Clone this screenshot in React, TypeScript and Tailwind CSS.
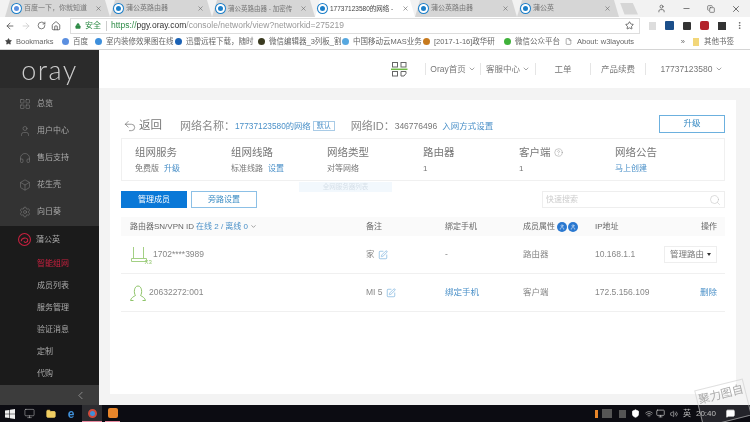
import { ChevronDown, ChevronLeft, ArrowLeft, ArrowRight, RotateCw, Home, Lock, Star, X, Minus, Copy, User, LayoutGrid, Headphones, Box, Settings, Search, SquarePen, CircleHelp, Undo2, Folder, MoreVertical, Monitor, Volume2, MessageSquare, ShieldCheck, File, Wifi } from 'lucide-react'

const tabs = [
  { title: '百度一下，你就知道', w: 'w-[105px]', pad: 'pl-[7px] pr-[8px]', size: 'text-[7px]', icon: 'bg-[#5b8fe0]' },
  { title: '蒲公英路由器', w: 'w-[102px]', pad: 'pl-[4px] pr-[8px]', size: 'text-[7px]', icon: 'bg-[#1c7fc9]' },
  { title: '蒲公英路由器 - 加密传', w: 'w-[103px]', pad: 'pl-[4px] pr-[8px]', size: 'text-[6.5px]', icon: 'bg-[#1c7fc9]' },
  { title: '17737123580的网络 -', w: 'w-[100px]', pad: 'pl-[3px] pr-[6px]', size: 'text-[6.5px]', icon: 'bg-[#1c7fc9]', active: true },
  { title: '蒲公英路由器', w: 'w-[102px]', pad: 'pl-[4px] pr-[8px]', size: 'text-[7px]', icon: 'bg-[#1c7fc9]' },
  { title: '蒲公英', w: 'w-[102px]', pad: 'pl-[4px] pr-[8px]', size: 'text-[7px]', icon: 'bg-[#1c7fc9]' },
]

const bookmarks = [
  { label: '百度', w: 'w-[33px]', icon: 'bg-[#5b8fe0]' },
  { label: '室内装修效果图在线', w: 'w-[80px]', icon: 'bg-[#3d8fdc]' },
  { label: '迅雷远程下载，随时', w: 'w-[83px]', icon: 'bg-[#1b62b5]' },
  { label: '微信编辑器_3列板_割', w: 'w-[84px]', icon: 'bg-[#3a3a20]' },
  { label: '中国移动云MAS业务', w: 'w-[81px]', icon: 'bg-[#57a8e0]' },
  { label: '[2017-1-16]政华研', w: 'w-[81px]', icon: 'bg-[#c77a1e]' },
  { label: '微信公众平台', w: 'w-[61px]', icon: 'bg-[#3fb13a]' },
]

const menu = [
  { label: '总览', Icon: LayoutGrid },
  { label: '用户中心', Icon: User },
  { label: '售后支持', Icon: Headphones },
  { label: '花生壳', Icon: Box },
  { label: '向日葵', Icon: Settings },
]

const subMenu = ['成员列表', '服务管理', '验证消息', '定制', '代购']

const info = [
  { title: '组网服务', value: '免费版', link: '升级' },
  { title: '组网线路', value: '标准线路', link: '设置' },
  { title: '网络类型', value: '对等网络' },
  { title: '路由器', value: '1' },
  { title: '客户端', value: '1', help: true },
  { title: '网络公告', link: '马上创建' },
]

const rowGrid = 'grid grid-cols-[236px_79px_78px_72px_1fr] items-center pl-[9px] pr-2'

function Tab({ title, w, pad, size, icon, active }: { title: string; w: string; pad: string; size: string; icon: string; active?: boolean }) {
  return (
    <div className={`${w} ${pad} relative flex h-[17px] shrink-0 items-center gap-[2px]`}>
      <div className={`absolute inset-0 [clip-path:polygon(0_100%,5px_0,calc(100%-5px)_0,100%_100%)] ${active ? 'bg-white' : 'bg-[#d6d6d6]'}`} />
      <div className={`relative h-[9px] w-[9px] shrink-0 rounded-full border-2 border-white ${icon} ring-1 ring-[#1c7fc9]`} />
      <span className={`relative ml-[1px] flex-1 overflow-hidden whitespace-nowrap ${size} ${active ? 'text-[#444]' : 'text-[#777]'}`}>{title}</span>
      <X size={7} className="relative shrink-0 text-[#666]" />
    </div>
  )
}

function OrayQr() {
  return (
    <svg width="17" height="15" viewBox="0 0 17 15" fill="none" stroke="#666" strokeWidth="1">
      <rect x="1.5" y="0.5" width="5" height="4.500" />
      <rect x="10" y="0.500" width="5" height="4.500" />
      <rect x="1.500" y="9.500" width="5" height="4.500" />
      <path d="M10 9.500h5v2l-2 2.500h-3z" />
      <path d="M0 7.300h16.500" stroke="#6fb845" strokeWidth="1.500" />
    </svg>
  )
}

function RouterIcon() {
  return (
    <svg width="22" height="18" viewBox="0 0 22 18" fill="none" stroke="#a3d084" strokeWidth="1">
      <path d="M3.500 1v11M13.500 1v11M1.500 12.500h15v3h-15z" />
      <text x="14.500" y="17.500" fontSize="6" fill="#8fc46a" stroke="none" fontFamily="Liberation Sans, sans-serif">X3</text>
    </svg>
  )
}

function ClientIcon() {
  return (
    <svg width="16" height="16" viewBox="0 0 16 16" fill="none" stroke="#8fc46a" strokeWidth="1">
      <path d="M5.500 10.500C3.500 8 4 1 8 1s4.500 7 2.500 9.500" />
      <path d="M5.500 10.500C3.500 11.500 1 13 .5 15.500h3M10.500 10.500c2 1 4.500 2.500 5 5h-3" />
    </svg>
  )
}

export default function App() {
  return (
    <div className="relative flex h-[422px] w-[750px] flex-col overflow-hidden bg-white font-['Liberation_Sans','Noto_Sans_CJK_SC',sans-serif] text-[#666] blur-[0.4px]">
      {/* 标签栏 */}
      <div className="flex h-[17px] shrink-0 items-center bg-[#f2f2f2] pl-[5px]">
        {tabs.map((t) => (
          <Tab key={t.title + t.w} {...t} />
        ))}
        <div className="ml-[1px] h-[12px] w-[18px] shrink-0 bg-[#d6d6d6] [clip-path:polygon(0_0,70%_0,100%_100%,25%_100%)]" />
        <div className="ml-auto flex items-center gap-[16px] pr-[9px] text-[#555]">
          <User size={9} />
          <Minus size={9} />
          <Copy size={8} />
          <X size={10} />
        </div>
      </div>
      {/* 地址栏 */}
      <div className="flex h-[17px] shrink-0 items-center bg-white pl-[5px] text-[#555]">
        <ArrowLeft size={10} />
        <ArrowRight size={10} className="ml-[6px] text-[#ccc]" />
        <RotateCw size={9} className="ml-[6px]" />
        <Home size={10} className="ml-[5px]" />
        <div className="ml-[9px] flex h-[16px] w-[200px] flex-1 items-center border border-[#ddd] pl-[4px] text-[8.500px]">
          <Lock size={6} className="fill-[#2e8b47] text-[#2e8b47]" />
          <span className="ml-[4px] text-[8px] text-[#2e8b47]">安全</span>
          <span className="ml-[5px] mr-[4px] h-[10px] w-px bg-[#ccc]" />
          <span className="text-[#2e8b47]">https://</span>
          <span className="text-[#333]">pgy.oray.com</span>
          <span className="text-[#999]">/console/network/view?networkid=275219</span>
          <Star size={9} className="ml-auto mr-[5px] text-[#444]" />
        </div>
        <div className="flex w-[110px] shrink-0 items-center gap-[9px] pl-[9px]">
          <div className="h-[8px] w-[7px] bg-[#ddd]" />
          <div className="h-[9px] w-[9px] rounded-[1px] bg-[#1c4f8a]" />
          <div className="h-[8px] w-[8px] rounded-[1px] bg-[#333]" />
          <div className="h-[9px] w-[9px] rounded-[2px] bg-[#b3232b]" />
          <div className="h-[8px] w-[8px] bg-[#333]" />
          <MoreVertical size={9} />
        </div>
      </div>
      {/* 书签栏 */}
      <div className="flex h-[16px] shrink-0 items-center border-b border-[#d5d5d5] bg-white pl-[5px] text-[7.500px] text-[#666]">
        <Star size={7} className="fill-[#444] text-[#444]" />
        <span className="ml-[4px] w-[46px]">Bookmarks</span>
        {bookmarks.map((b) => (
          <div key={b.label} className={`${b.w} flex shrink-0 items-center gap-[4px] overflow-hidden whitespace-nowrap`}>
            <span className={`h-[7px] w-[7px] shrink-0 rounded-full ${b.icon}`} />
            <span className="overflow-hidden">{b.label}</span>
          </div>
        ))}
        <File size={7} className="text-[#777]" />
        <span className="ml-[5px]">About: w3layouts</span>
        <span className="ml-auto">»</span>
        <span className="ml-[8px] h-[8px] w-[6px] bg-[#f2d679]" />
        <span className="ml-[5px] mr-[16px]">其他书签</span>
      </div>

      <div className="flex min-h-0 flex-1">
        {/* 侧边栏 */}
        <aside className="flex w-[99px] shrink-0 flex-col bg-[#333] text-[8px] text-[#aaa]">
          <div className="flex h-[38px] shrink-0 items-center justify-center bg-[#2b2b2b]">
            <span className="font-['Lato',sans-serif] text-[27px] font-light leading-none tracking-[1.500px] text-[#ccc]">oray</span>
          </div>
          <div className="flex flex-col pt-[2px]">
            {menu.map(({ label, Icon }) => (
              <div key={label} className="flex h-[27.200px] items-center gap-[6px] pl-[19px]">
                <Icon size={12} strokeWidth={1} className="text-[#888]" />
                <span>{label}</span>
              </div>
            ))}
          </div>
          <div className="flex flex-1 flex-col bg-[#1b1b1b]">
            <div className="flex h-[28px] shrink-0 items-center gap-[5px] pl-[18px]">
              <svg width="13" height="13" viewBox="0 0 12 12" fill="none" stroke="#c8203f" strokeWidth="1">
                <circle cx="6" cy="6" r="5.500" />
                <path d="M3 7.500C3 4.500 8.500 3.500 9 6.500 9.300 8.800 6 9.500 5.500 7.500" />
              </svg>
              <span>蒲公英</span>
            </div>
            <div className="flex h-[20px] shrink-0 items-center pl-[37px] text-[#c8203f]">智能组网</div>
            <div className="flex flex-col pt-[1px]">
              {subMenu.map((s) => (
                <div key={s} className="flex h-[22px] items-center pl-[37px]">{s}</div>
              ))}
            </div>
          </div>
          <div className="flex h-[22px] shrink-0 items-center justify-end bg-[#3c3c3c] pr-[12px]">
            <ChevronLeft size={13} strokeWidth={1} className="text-[#ccc]" />
          </div>
        </aside>

        <div className="flex min-w-0 flex-1 flex-col">
          {/* 顶部导航 */}
          <header className="flex h-[38px] shrink-0 items-center bg-white text-[8.500px] text-[#777]">
            <div className="ml-[292px] flex w-[34px] shrink-0 items-center"><OrayQr /></div>
            <div className="flex h-[12px] w-[55px] items-center justify-center gap-[2px] border-l border-[#e5e5e5]">Oray首页<ChevronDown size={8} /></div>
            <div className="flex h-[12px] w-[55px] items-center justify-center gap-[2px] border-l border-[#e5e5e5]">客服中心<ChevronDown size={8} /></div>
            <div className="flex h-[12px] w-[55px] items-center justify-center border-l border-[#e5e5e5]">工单</div>
            <div className="flex h-[12px] w-[55px] items-center justify-center border-l border-[#e5e5e5]">产品续费</div>
            <div className="flex h-[12px] w-[92px] items-center justify-center gap-[2px] border-l border-[#e5e5e5]">17737123580<ChevronDown size={8} /></div>
          </header>

          {/* 主内容 */}
          <main className="flex min-h-0 flex-1 bg-[#f3f3f3] pb-[11px] pl-[11px] pr-[14px] pt-[12px]">
            <div className="relative flex flex-1 flex-col bg-white pl-[11px] pr-[11px] pt-[14px]">
              <div className="flex h-[24px] shrink-0 items-center">
                <Undo2 size={14} strokeWidth={1} className="ml-[2px] text-[#555]" />
                <span className="ml-[2px] w-[41px] text-[11.500px] text-[#777]">返回</span>
                <span className="text-[11px] text-[#888]">网络名称：</span>
                <span className="text-[8.300px] text-[#4a90c8]">17737123580的网络</span>
                <span className="ml-[2px] flex h-[10px] w-[22px] items-center justify-center border border-[#a9cbe6] text-[7px] text-[#4a90c8]">默认</span>
                <span className="ml-[16px] text-[11px] text-[#888]">网络ID：</span>
                <span className="text-[8.500px] text-[#777]">346776496</span>
                <span className="ml-[5px] text-[8.500px] text-[#4a90c8]">入网方式设置</span>
                <button className="ml-auto mb-[5px] flex h-[18px] w-[66px] items-center justify-center border border-[#6cb0de] text-[8.500px] text-[#3a8cc4]">升级</button>
              </div>

              <div className="grid h-[43px] shrink-0 grid-cols-[96px_96px_96px_96px_96px_1fr] content-center gap-y-[5px] border border-[#f0f0f0]">
                {info.map((c) => (
                  <div key={c.title} className="pl-[13px] text-[10.500px] leading-[13px] text-[#777]">
                    <span className="flex items-center gap-[3px]">
                      {c.title}
                      {c.help && <CircleHelp size={9} strokeWidth={1} />}
                    </span>
                  </div>
                ))}
                {info.map((c) => (
                  <div key={c.title + 'v'} className="pl-[13px] text-[8px] leading-[10px] text-[#777]">
                    {c.value}
                    {c.link && <span className={`${c.value ? 'ml-[5px]' : ''} text-[#4a90c8]`}>{c.link}</span>}
                  </div>
                ))}
              </div>

              <div className="absolute left-[189px] top-[82px] flex h-[10px] w-[93px] items-center justify-center bg-[#f2f8fd] text-[6.500px] text-[#d5dfe8]">全网服务器列表</div>

              <div className="mt-[10px] flex h-[17px] shrink-0 items-center gap-[4px]">
                <button className="flex h-[17px] w-[66px] items-center justify-center bg-[#0a78d7] text-[8px] text-white">管理成员</button>
                <button className="flex h-[17px] w-[66px] items-center justify-center border border-[#8cc0e6] text-[8px] text-[#3a8cc4]">旁路设置</button>
                <div className="ml-auto flex h-[17px] w-[183px] items-center justify-between border border-[#eee] px-[3px] text-[8px] text-[#ccc]">
                  快速搜索
                  <Search size={12} strokeWidth={1} className="text-[#bbb]" />
                </div>
              </div>

              <div className={`${rowGrid} mt-[9px] h-[19px] shrink-0 bg-[#fafafa] text-[8px] text-[#666]`}>
                <div className="flex items-center">
                  路由器SN/VPN ID
                  <span className="ml-[2px] text-[#4a90c8]">在线 2 / 离线 0</span>
                  <ChevronDown size={7} className="ml-[2px]" />
                </div>
                <div>备注</div>
                <div>绑定手机</div>
                <div className="flex items-center gap-[1px]">
                  成员属性
                  <span className="ml-[1px] flex h-[10px] w-[10px] items-center justify-center rounded-full bg-[#2a78d0]"><User size={6} className="text-white" /></span>
                  <span className="flex h-[10px] w-[10px] items-center justify-center rounded-full bg-[#2a78d0]"><User size={6} className="text-white" /></span>
                </div>
                <div className="flex items-center justify-between">IP地址<span>操作</span></div>
              </div>

              <div className={`${rowGrid} h-[38px] shrink-0 border-b border-[#f0f0f0] text-[8.500px] text-[#888]`}>
                <div className="flex items-center gap-[1px]">
                  <RouterIcon />
                  <span>1702****3989</span>
                </div>
                <div className="flex items-center gap-[3px]">家<SquarePen size={10} strokeWidth={1.500} className="text-[#6aa8d8]" /></div>
                <div>-</div>
                <div>路由器</div>
                <div className="flex items-center justify-between">
                  10.168.1.1
                  <span className="flex h-[17px] w-[53px] items-center justify-center gap-[3px] border border-[#eee] text-[#777]">
                    管理路由
                    <span className="h-0 w-0 border-x-[2.500px] border-t-[3px] border-x-transparent border-t-[#333]" />
                  </span>
                </div>
              </div>

              <div className={`${rowGrid} h-[38px] shrink-0 border-b border-[#f0f0f0] text-[8.500px] text-[#888]`}>
                <div className="flex items-center gap-[3px]">
                  <ClientIcon />
                  <span>20632272:001</span>
                </div>
                <div className="flex items-center gap-[3px]">MI 5<SquarePen size={10} strokeWidth={1.500} className="text-[#6aa8d8]" /></div>
                <div className="text-[#4a90c8]">绑定手机</div>
                <div>客户端</div>
                <div className="flex items-center justify-between">
                  172.5.156.109
                  <span className="text-[#4a90c8]">删除</span>
                </div>
              </div>
            </div>
          </main>
        </div>
      </div>

      {/* 任务栏 */}
      <footer className="flex h-[17px] shrink-0 items-center bg-[#0c0c12] pl-[5px] text-[#ddd]">
        <svg width="10" height="10" viewBox="0 0 10 10" fill="#eee"><path d="M0 1.500 4.400.9v3.800H0zM5 .8 10 0v4.700H5zM0 5.300h4.400v3.800L0 8.500zM5 5.300h5V10l-5-.8z" /></svg>
        <Monitor size={11} strokeWidth={1} className="ml-[9px]" />
        <Folder size={10} className="ml-[11px] fill-[#f0cd62] text-[#f0cd62]" />
        <span className="ml-[10px] w-[10px] text-center text-[12px] font-bold leading-none text-[#3f8fd8]">e</span>
        <div className="ml-[6px] flex h-[17px] w-[20px] items-center justify-center border-b border-[#e88aa0] bg-[#2c2c30]">
          <span className="h-[9px] w-[9px] rounded-full border-2 border-[#d04a3c] bg-[#3f8fd8]" />
        </div>
        <div className="ml-[3px] flex h-[17px] w-[15px] items-center justify-center border-b border-[#e88aa0]">
          <span className="h-[10px] w-[10px] rounded-[2px] bg-[#e8862a]" />
        </div>
        <div className="ml-auto flex items-center pr-[15px] text-[#bbb]">
          <span className="h-[8px] w-[3px] bg-[#e8862a]" />
          <span className="ml-[4px] h-[9px] w-[10px] bg-[#555]" />
          <span className="ml-[7px] h-[8px] w-[7px] bg-[#555]" />
          <ShieldCheck size={9} className="ml-[5px] fill-white text-white" />
          <Wifi size={8} className="ml-[5px]" />
          <Monitor size={9} className="ml-[3px]" />
          <Volume2 size={8} className="ml-[5px]" />
          <span className="ml-[5px] text-[8px]">英</span>
          <span className="ml-[5px] text-[8px]">20:40</span>
          <MessageSquare size={9} className="ml-[10px] fill-white text-white" />
        </div>
      </footer>

      {/* 水印 */}
      <div className="absolute left-[698px] top-[384px] flex h-[38px] w-[50px] -rotate-[14deg] items-start justify-center border border-[#ccc]/60 bg-white/10 pt-[2px] text-[11.500px] leading-[14px] text-[#aaa]">聚力图自</div>
    </div>
  )
}
